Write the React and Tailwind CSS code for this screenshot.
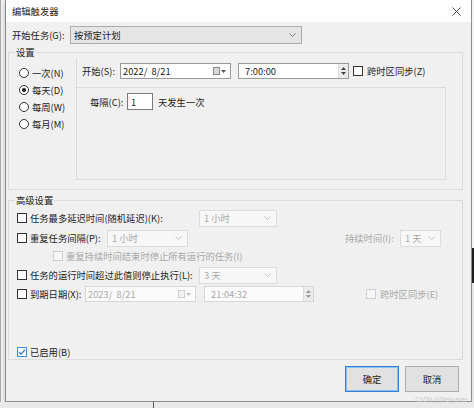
import React from "react";

function Chevron({ className = "" }) {
  return (
    <svg width="7" height="4" viewBox="0 0 7 4" className={className}>
      <path d="M0.5 0.5 L3.5 3.5 L6.5 0.5" fill="none" stroke="currentColor" strokeWidth="1" />
    </svg>
  );
}

function Check({ checked, disabled }) {
  const tone = disabled
    ? "border-[#cfcfcf] bg-[#f6f6f6]"
    : checked
    ? "border-[#3c8fd8] bg-white"
    : "border-[#333333] bg-white";
  return (
    <span className={`flex h-[10px] w-[10px] shrink-0 items-center justify-center border ${tone}`}>
      {checked && (
        <svg width="8" height="8" viewBox="0 0 8 8">
          <path d="M1 4.2 L3 6.2 L7 1.6" fill="none" stroke="#2a6fc9" strokeWidth="1.2" />
        </svg>
      )}
    </span>
  );
}

function Radio({ on, label }) {
  return (
    <div className="flex h-[17px] items-center">
      <span className="flex h-[10px] w-[10px] items-center justify-center rounded-full border border-[#333333] bg-white">
        {on && <span className="h-[4px] w-[4px] rounded-full bg-[#111111]" />}
      </span>
      <span className="ml-[3px]">{label}</span>
    </div>
  );
}

function Combo({ value, width, disabled }) {
  const tone = disabled
    ? "border-[#dcdcdc] bg-[#f7f7f7] text-[#a8a8a8]"
    : "border-[#adadad] bg-[#e5e5e5] text-[#1b1b1b]";
  return (
    <div className={`flex h-[17px] shrink-0 items-center justify-between border pl-[4px] pr-[5px] ${width} ${tone}`}>
      <span>{value}</span>
      <Chevron className={disabled ? "text-[#c2c2c2]" : "text-[#555555]"} />
    </div>
  );
}

function DateBox({ value, disabled }) {
  return (
    <div
      className={`flex h-[16px] w-[111px] shrink-0 items-center justify-between border pl-[2px] pr-[4px] ${
        disabled ? "border-[#d6d6d6] bg-[#fbfbfb] text-[#a8a8a8]" : "border-[#9a9a9a] bg-white"
      }`}
    >
      <span className="whitespace-pre">{value}</span>
      <span className="flex items-center gap-[1px]">
        <span className={`h-[8px] w-[7px] border ${disabled ? "border-[#d0d0d0] bg-[#f2f2f2]" : "border-[#8a8a8a] bg-[#d8d8d8]"}`} />
        <svg width="5" height="3" viewBox="0 0 5 3">
          <path d="M0 0 L5 0 L2.5 3 Z" fill={disabled ? "#c4c4c4" : "#555555"} />
        </svg>
      </span>
    </div>
  );
}

function TimeBox({ value, disabled, width }) {
  return (
    <div
      className={`flex h-[16px] shrink-0 items-center justify-between border pl-[6px] ${width} ${
        disabled ? "border-[#d6d6d6] bg-[#fbfbfb] text-[#a8a8a8]" : "border-[#9a9a9a] bg-white"
      }`}
    >
      <span>{value}</span>
      <span className="flex h-full w-[10px] flex-col items-center justify-center gap-[2px] border-l border-[#dcdcdc] bg-[#ececec]">
        <svg width="5" height="3" viewBox="0 0 5 3">
          <path d="M0 3 L5 3 L2.5 0 Z" fill={disabled ? "#9a9a9a" : "#444444"} />
        </svg>
        <svg width="5" height="3" viewBox="0 0 5 3">
          <path d="M0 0 L5 0 L2.5 3 Z" fill={disabled ? "#9a9a9a" : "#444444"} />
        </svg>
      </span>
    </div>
  );
}

export default function App() {
  return (
    <div className="relative flex h-[408px] w-[474px] flex-col overflow-hidden bg-[#ececec] font-['Noto_Sans_CJK_SC','Noto_Sans',sans-serif] text-[9.3px] leading-[12px] text-[#1b1b1b]">
      <div className="flex h-[402px]">
        {/* window behind, left edge */}
        <div className="w-[5px] border-l border-[#a8a8a8] bg-[#f2f2f2]" />

        {/* dialog */}
        <div className="flex w-[467px] flex-col border-x border-b border-[#8c8c8c] bg-[#f0f0f0] shadow-[0_2px_4px_rgba(0,0,0,0.25)]">
          <div className="flex h-[22px] shrink-0 items-center justify-between bg-white pl-[6px] pr-[10px]">
            <span>编辑触发器</span>
            <svg width="9" height="9" viewBox="0 0 9 9">
              <path d="M0.5 0.5 L8.5 8.5 M8.5 0.5 L0.5 8.5" stroke="#333333" strokeWidth="0.9" />
            </svg>
          </div>

          <div className="mt-[4px] flex h-[18px] items-center">
            <span className="w-[64px] pl-[6px]">开始任务(G):</span>
            <div className="flex h-[18px] w-[232px] items-center justify-between border border-[#adadad] bg-[#e5e5e5] pl-[3px] pr-[5px]">
              <span>按预定计划</span>
              <Chevron className="text-[#777777]" />
            </div>
          </div>

          {/* 设置 */}
          <fieldset className="mt-[2px] ml-[2px] w-[455px] border border-[#dcdcdc]">
            <legend className="ml-[6px] px-[1px] leading-[12px]">设置</legend>
            <div className="flex h-[131px]">
              <div className="flex w-[67px] flex-col pl-[10px] pt-[6px]">
                <Radio label="一次(N)" />
                <Radio on label="每天(D)" />
                <Radio label="每周(W)" />
                <Radio label="每月(M)" />
              </div>
              <div className="flex h-[122px] w-[370px] flex-col border-l border-[#dcdcdc]">
                <div className="flex h-[29px] items-start pl-[5px] pt-[5px]">
                  <span className="flex h-[16px] w-[38px] items-center">开始(S):</span>
                  <DateBox value="2022/  8/21" />
                  <div className="ml-[7px]">
                    <TimeBox value="7:00:00" width="w-[111px]" />
                  </div>
                  <div className="ml-[4px] flex h-[16px] items-center">
                    <Check />
                    <span className="ml-[4px]">跨时区同步(Z)</span>
                  </div>
                </div>
                <div className="h-[93px] border-y border-r border-[#dcdcdc] pl-[13px] pt-[5px]">
                  <div className="flex h-[17px] items-center">
                    <span className="w-[37px]">每隔(C):</span>
                    <div className="flex h-[17px] w-[26px] items-center border border-[#7a7a7a] bg-white pl-[3px]">1</div>
                    <span className="ml-[5px]">天发生一次</span>
                  </div>
                </div>
              </div>
            </div>
          </fieldset>

          {/* 高级设置 */}
          <fieldset className="mt-[4px] ml-[2px] w-[455px] border border-[#dcdcdc]">
            <legend className="ml-[6px] px-[1px] leading-[12px]">高级设置</legend>
            <div className="flex h-[153px] flex-col pl-[8px]">
              <div className="mt-[3px] flex h-[18px] items-center">
                <Check />
                <span className="ml-[3px] w-[169px]">任务最多延迟时间(随机延迟)(K):</span>
                <Combo value="1 小时" width="w-[78px]" disabled />
              </div>
              <div className="mt-[2px] flex h-[18px] items-center">
                <Check />
                <span className="ml-[3px] w-[77px]">重复任务间隔(P):</span>
                <Combo value="1 小时" width="w-[81px]" disabled />
                <span className="ml-[157px] w-[55px] text-[#a8a8a8]">持续时间(I):</span>
                <Combo value="1 天" width="w-[41px]" disabled />
              </div>
              <div className="flex h-[18px] items-center pl-[36px]">
                <Check disabled />
                <span className="ml-[3px] text-[#a8a8a8]">重复持续时间结束时停止所有运行的任务(I)</span>
              </div>
              <div className="mt-[1px] flex h-[18px] items-center">
                <Check />
                <span className="ml-[3px] w-[169px]">任务的运行时间超过此值则停止执行(L):</span>
                <Combo value="3 天" width="w-[78px]" disabled />
              </div>
              <div className="mt-[1px] flex h-[18px] items-center">
                <Check />
                <span className="ml-[3px] w-[55px]">到期日期(X):</span>
                <DateBox value="2023/  8/21" disabled />
                <div className="ml-[8px]">
                  <TimeBox value="21:04:32" width="w-[110px]" disabled />
                </div>
                <div className="ml-[52px] flex items-center">
                  <Check disabled />
                  <span className="ml-[4px] text-[#a8a8a8]">跨时区同步(E)</span>
                </div>
              </div>
              <div className="mt-auto mb-[1px] flex h-[12px] items-center">
                <Check checked />
                <span className="ml-[3px]">已启用(B)</span>
              </div>
            </div>
          </fieldset>

          <div className="flex justify-end gap-[6px] pr-[12px] pt-[6px]">
            <button className="flex h-[26px] w-[54px] items-center justify-center border border-[#2f7fd6] bg-[#e1e1e1] shadow-[inset_0_0_0_1px_#8cc0ee]">
              确定
            </button>
            <button className="flex h-[26px] w-[54px] items-center justify-center border border-[#adadad] bg-[#e1e1e1]">
              取消
            </button>
          </div>
        </div>

        {/* window behind, right edge */}
        <div className="flex flex-1 flex-col">
          <div className="h-[248px] bg-[#f4f4f4]" />
          <div className="h-[35px] bg-[#1f1f1f]" />
          <div className="flex-1 bg-[#e6e6e6]" />
        </div>
      </div>
      <div className="flex flex-1 bg-[#e9e9e9]">
        <div className="ml-[153px] w-px bg-[#555555]" />
      </div>

      <span className="absolute bottom-[5px] right-[6px] text-[6.5px] leading-[8px] text-[#c9c9c9]">CSDN @Weiyaner</span>
    </div>
  );
}
